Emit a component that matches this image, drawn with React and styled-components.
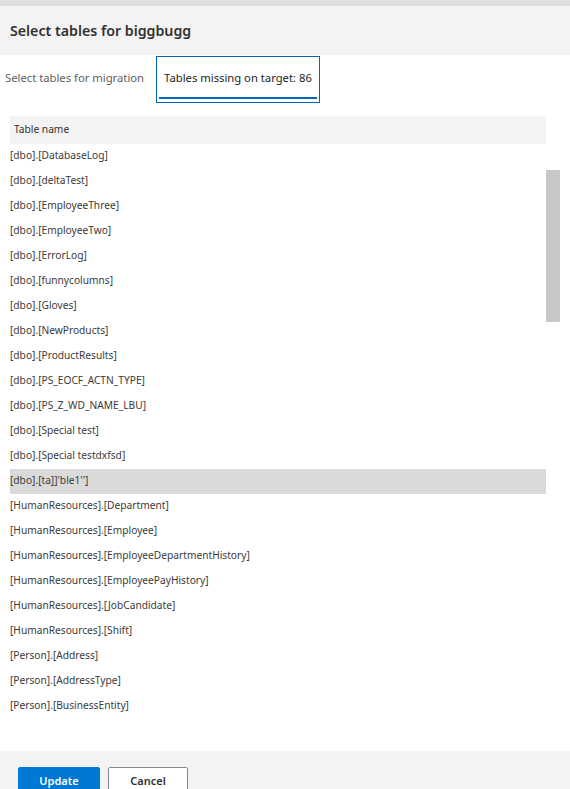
import styled, { createGlobalStyle } from 'styled-components';

const GlobalStyle = createGlobalStyle`
  html, body {
    margin: 0;
    padding: 0;
    background: #ffffff;
    font-family: "Segoe UI", "Noto Sans", "Liberation Sans", sans-serif;
    color: #323130;
  }
`;

const Panel = styled.div`
  width: 570px;
  height: 789px;
  display: flex;
  flex-direction: column;
  overflow: hidden;
  background: #ffffff;
`;

const TopStrip = styled.div`
  height: 6px;
  flex-shrink: 0;
  background: #dedede;
`;

const Header = styled.div`
  height: 49px;
  flex-shrink: 0;
  display: flex;
  align-items: center;
  padding-left: 10px;
  background: #f3f3f3;
`;

const Title = styled.h1`
  margin: 0;
  font-size: 14.2px;
  font-weight: 600;
  color: #323130;
`;

const Tabs = styled.div`
  height: 48px;
  flex-shrink: 0;
  display: flex;
  align-items: stretch;
  padding-top: 1px;
  box-sizing: border-box;
`;

const Tab = styled.div`
  display: flex;
  box-sizing: border-box;
  padding: 0 ${(p) => (p.$active ? '2px' : '0')} 3px;
  margin-left: ${(p) => (p.$active ? '7px' : '0')};
  border: 1px solid ${(p) => (p.$active ? '#0067b8' : 'transparent')};
`;

const TabLabel = styled.div`
  display: flex;
  align-items: center;
  padding: 0 ${(p) => (p.$active ? '5px' : '4px')};
  font-size: 11.25px;
  color: ${(p) => (p.$active ? '#201f1e' : '#605e5c')};
  border-bottom: 2px solid ${(p) => (p.$active ? '#0067b8' : 'transparent')};
`;

const TableArea = styled.div`
  height: 635px;
  flex-shrink: 0;
  display: flex;
  margin-top: 13px;
  padding-left: 10px;
`;

const List = styled.div`
  width: 536px;
  display: flex;
  flex-direction: column;
`;

const HeadRow = styled.div`
  height: 28px;
  flex-shrink: 0;
  display: flex;
  align-items: center;
  padding: 0 0 3px 4px;
  box-sizing: border-box;
  background: #f3f3f3;
  font-size: 10.2px;
  color: #323130;
`;

const Row = styled.div`
  height: 25px;
  flex-shrink: 0;
  display: flex;
  align-items: center;
  padding-bottom: 3px;
  box-sizing: border-box;
  font-size: 10.2px;
  color: #3b3a39;
  background: ${(p) => (p.$selected ? '#dadada' : 'transparent')};
`;

const ScrollTrack = styled.div`
  width: 14px;
  padding-top: 54px;
`;

const ScrollThumb = styled.div`
  height: 152px;
  background: #c8c8c8;
`;

const Footer = styled.div`
  height: 60px;
  flex-shrink: 0;
  display: flex;
  align-items: flex-start;
  gap: 8px;
  padding: 16px 0 0 18px;
  background: #f3f3f3;
`;

const Button = styled.button`
  height: 26px;
  width: ${(p) => (p.$primary ? '82px' : '80px')};
  box-sizing: border-box;
  font-family: inherit;
  font-size: 11px;
  font-weight: 600;
  border-radius: 2px;
  border: 1px solid ${(p) => (p.$primary ? '#0078d4' : '#8a8886')};
  background: ${(p) => (p.$primary ? '#0078d4' : '#ffffff')};
  color: ${(p) => (p.$primary ? '#ffffff' : '#323130')};
  padding: 0;
`;

const tables = [
  '[dbo].[DatabaseLog]',
  '[dbo].[deltaTest]',
  '[dbo].[EmployeeThree]',
  '[dbo].[EmployeeTwo]',
  '[dbo].[ErrorLog]',
  '[dbo].[funnycolumns]',
  '[dbo].[Gloves]',
  '[dbo].[NewProducts]',
  '[dbo].[ProductResults]',
  '[dbo].[PS_EOCF_ACTN_TYPE]',
  '[dbo].[PS_Z_WD_NAME_LBU]',
  '[dbo].[Special test]',
  '[dbo].[Special testdxfsd]',
  "[dbo].[ta]]'ble1'']",
  '[HumanResources].[Department]',
  '[HumanResources].[Employee]',
  '[HumanResources].[EmployeeDepartmentHistory]',
  '[HumanResources].[EmployeePayHistory]',
  '[HumanResources].[JobCandidate]',
  '[HumanResources].[Shift]',
  '[Person].[Address]',
  '[Person].[AddressType]',
  '[Person].[BusinessEntity]',
];

function App() {
  return (
    <Panel>
      <GlobalStyle />
      <TopStrip />
      <Header>
        <Title>Select tables for biggbugg</Title>
      </Header>
      <Tabs>
        <Tab>
          <TabLabel>Select tables for migration</TabLabel>
        </Tab>
        <Tab $active>
          <TabLabel $active>Tables missing on target: 86</TabLabel>
        </Tab>
      </Tabs>
      <TableArea>
        <List>
          <HeadRow>Table name</HeadRow>
          {tables.map((name, i) => (
            <Row key={name} $selected={i === 13}>
              {name}
            </Row>
          ))}
        </List>
        <ScrollTrack>
          <ScrollThumb />
        </ScrollTrack>
      </TableArea>
      <Footer>
        <Button $primary>Update</Button>
        <Button>Cancel</Button>
      </Footer>
    </Panel>
  );
}

export default App;
